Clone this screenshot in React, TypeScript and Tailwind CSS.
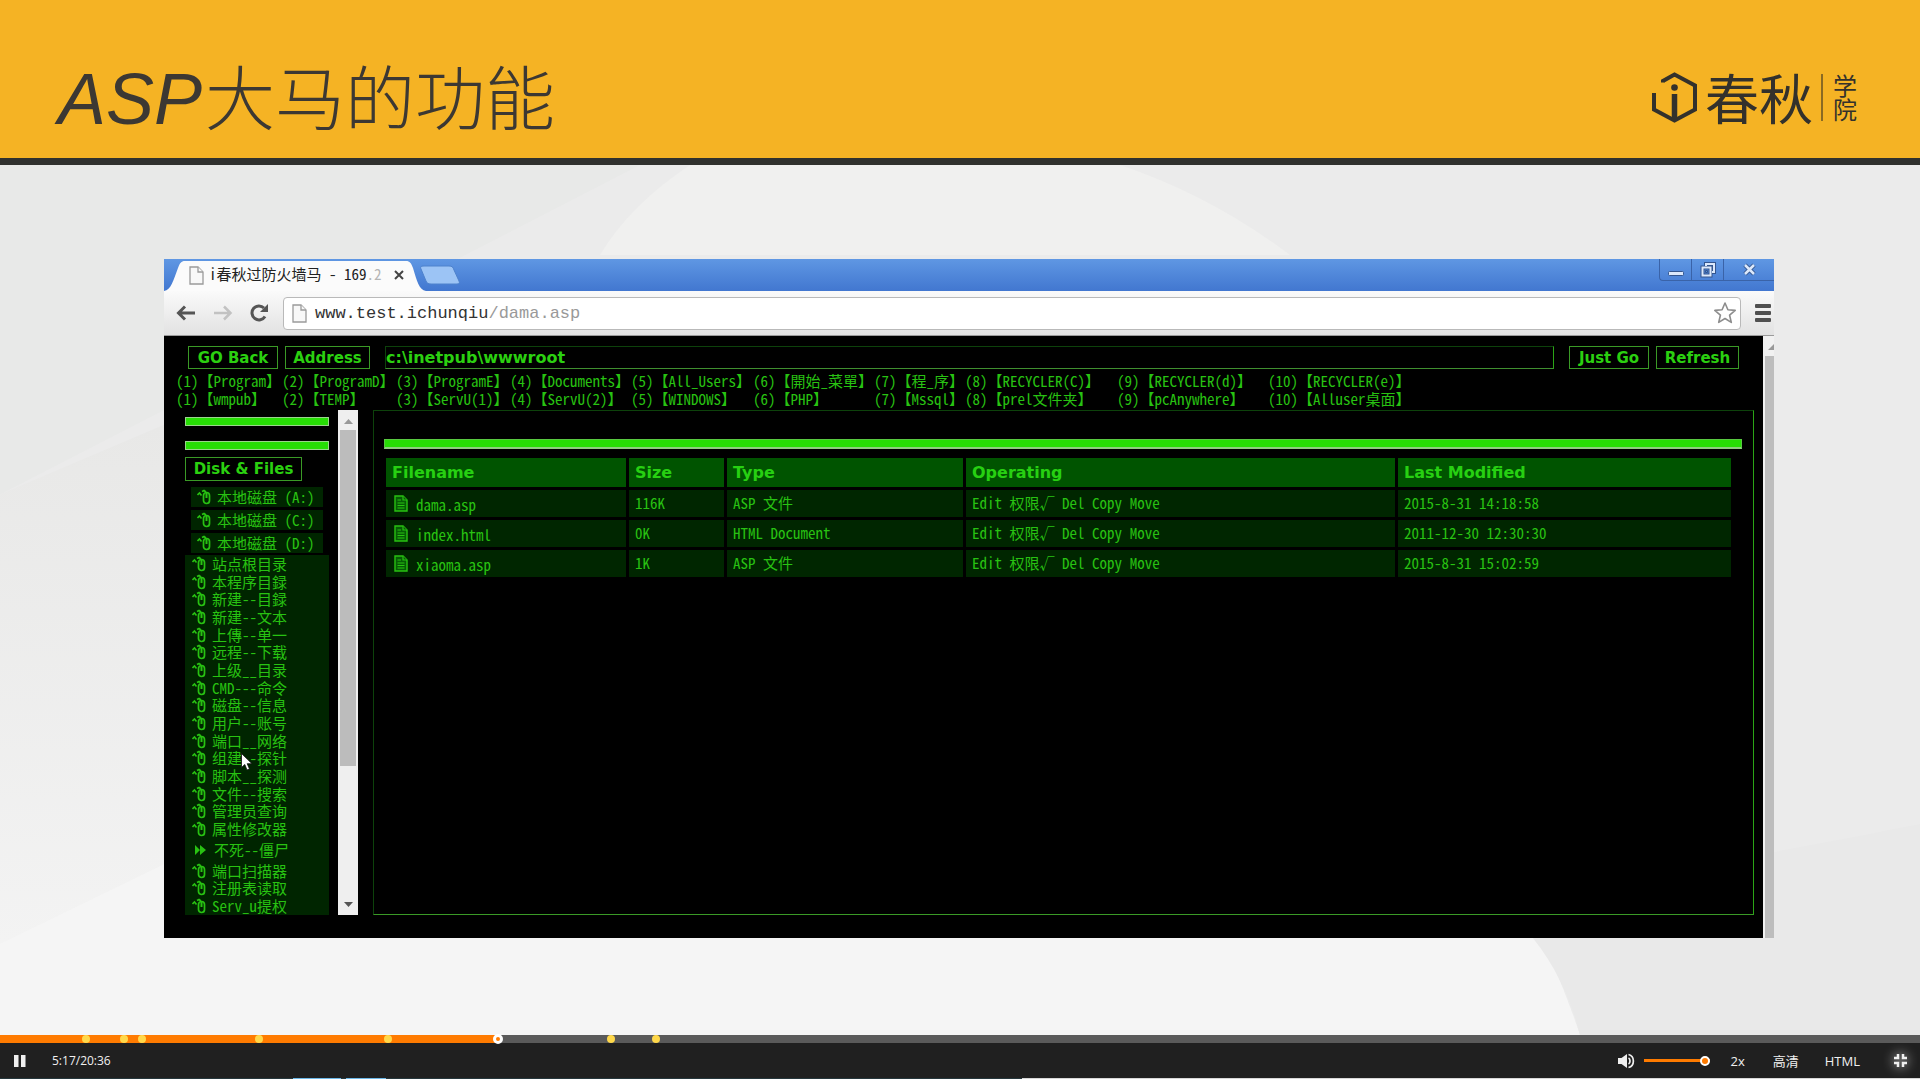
import { useState } from "react";

const quickLinks = [
  ["【Program】", "【ProgramD】", "【ProgramE】", "【Documents】", "【All_Users】", "【開始_菜單】", "【程_序】", "【RECYCLER(C)】", "【RECYCLER(d)】", "【RECYCLER(e)】"],
  ["【wmpub】", "【TEMP】", "【ServU(1)】", "【ServU(2)】", "【WINDOWS】", "【PHP】", "【Mssql】", "【prel文件夹】", "【pcAnywhere】", "【Alluser桌面】"],
];

const disks = ["本地磁盘 (A:)", "本地磁盘 (C:)", "本地磁盘 (D:)"];

const tools = [
  "站点根目录",
  "本程序目録",
  "新建--目録",
  "新建--文本",
  "上傳--单一",
  "远程--下载",
  "上级__目录",
  "CMD---命令",
  "磁盘--信息",
  "用户--账号",
  "端口__网络",
  "组建--探针",
  "脚本__探测",
  "文件--搜索",
  "管理员查询",
  "属性修改器",
];

const moreTools = ["端口扫描器", "注册表读取", "Serv_u提权"];

const files = [
  { name: "dama.asp", size: "116K", type: "ASP 文件", modified: "2015-8-31 14:18:58" },
  { name: "index.html", size: "0K", type: "HTML Document", modified: "2011-12-30 12:30:30" },
  { name: "xiaoma.asp", size: "1K", type: "ASP 文件", modified: "2015-8-31 15:02:59" },
];

const operations = ["Edit", "权限√", "Del", "Copy", "Move"];

// チャプター位置（％）
const chapters = [4.48, 6.46, 7.4, 13.49, 20.21, 31.82, 34.17];

const MouseIcon = () => (
  <svg className="h-4 w-[14px] shrink-0" viewBox="0 0 14 16" fill="none" stroke="currentColor">
    <path d="M0.500 6 2.500 4l2 2.500M5 2.500l2-1 2 1.500" strokeWidth="1.600" />
    <rect x="6.500" y="3.500" width="6" height="11" rx="3" strokeWidth="1.700" />
    <path d="M9.500 4v5" strokeWidth="2" />
  </svg>
);

const FileIcon = () => (
  <svg className="h-[17px] w-[14px] shrink-0" viewBox="0 0 14 17" fill="#065c05" stroke="currentColor">
    <path d="M1 1h8l4 4v11H1z" strokeWidth="1.400" />
    <path d="M9 1v4h4M3.500 5h3.500M3.500 8h7M3.500 10.500h7M3.500 13h7" strokeWidth="1.200" />
  </svg>
);

const PageIcon = () => (
  <svg className="h-[19px] w-[15px] shrink-0" viewBox="0 0 15 19" fill="#f8f8f8" stroke="#9a9a9a">
    <path d="M1 1h8l5 5v12H1z" strokeWidth="1.300" />
    <path d="M9 1v5h5" strokeWidth="1.300" />
  </svg>
);

const Logo = () => (
  <div className="flex items-center text-[#33312c]">
    <svg className="h-[51px] w-[45px]" viewBox="0 0 45 51" fill="none" stroke="currentColor">
      <path d="M11 10.500V9L22.500 2.500 43 13.500v24L22.500 48.500 2 37.500V21" strokeWidth="4" />
      <circle cx="22.500" cy="15.500" r="3.300" fill="currentColor" stroke="none" />
      <path d="M22.500 22v26" strokeWidth="5.500" />
    </svg>
    <span className="ml-2 font-['Noto_Sans_CJK_SC',sans-serif] text-[54px] leading-[54px]">春秋</span>
    <span className="ml-2 h-[47px] w-[2px] bg-[#8a6a22]" />
    <span className="ml-[10px] w-6 font-['Noto_Sans_CJK_SC',sans-serif] text-2xl leading-6">
      学院
    </span>
  </div>
);

const TabStrip = () => (
  <div className="flex h-8 justify-between bg-linear-to-b from-[#5f97e3] to-[#4277d0]">
    <div className="flex">
      <div className="relative flex w-[262px] items-center pl-[25px]">
        <svg className="absolute inset-0 h-8 w-[262px]" viewBox="0 0 262 32" fill="#fbfbfb">
          <path d="M0 32C7 31 9 22 14 9 16 4 17 2 21 2H242c4 0 5 2 7 7 4 13 6 22 13 23z" />
        </svg>
        <div className="relative flex items-center">
          <PageIcon />
          <span className="ml-[5px] w-[178px] whitespace-pre pb-[2px] font-['Noto_Sans_Mono_CJK_SC','Noto_Sans_CJK_SC',monospace] text-[15px] leading-5 text-[#222]">
            i春秋过防火墙马 - 169<span className="text-[#b5b5b5]">.2</span>
          </span>
          <button aria-label="Close tab" className="ml-[7px]">
            <svg className="size-[10px]" viewBox="0 0 10 10" stroke="#444" strokeWidth="2">
              <path d="M1 1l8 8M9 1 1 9" />
            </svg>
          </button>
        </div>
      </div>
      <button aria-label="New tab" className="-ml-[6px]">
        <svg className="h-5 w-[40px]" viewBox="0 0 40 20">
          <path d="M4 1h25c3 0 4 1 5 4l5 11c1 2 0 3-2 3H11c-3 0-4-1-5-3L1 4C0 2 1 1 4 1z" fill="#9cc4f5" stroke="#4e82cc" />
        </svg>
      </button>
    </div>
    <div className="flex h-[22px] rounded-bl border-b border-l border-[#3a63a8] text-[#dbe8fb]">
      <button aria-label="Minimize" className="flex w-8 items-center justify-center border-r border-[#3a63a8] pt-2">
        <svg className="h-[5px] w-4" viewBox="0 0 16 5">
          <rect x="0.500" y="0.500" width="15" height="4" rx="1" fill="currentColor" stroke="#34568f" />
        </svg>
      </button>
      <button aria-label="Restore" className="flex w-8 items-center justify-center border-r border-[#3a63a8]">
        <svg className="size-4" viewBox="0 0 16 16" fill="none">
          <path d="M6 4V2h8v8h-2M2.500 5.500h8v8h-8z" stroke="#34568f" strokeWidth="4" />
          <path d="M6 4V2h8v8h-2M2.500 5.500h8v8h-8z" stroke="currentColor" strokeWidth="2" />
          <path d="M5.500 8.500h2v2h-2z" stroke="#34568f" />
        </svg>
      </button>
      <button aria-label="Close" className="flex w-[50px] items-center justify-center">
        <svg className="size-[13px]" viewBox="0 0 13 13">
          <path d="M2 2l9 9M11 2l-9 9" stroke="#34568f" strokeWidth="4.500" />
          <path d="M2 2l9 9M11 2l-9 9" stroke="currentColor" strokeWidth="2.500" />
        </svg>
      </button>
    </div>
  </div>
);

const AddressBar = () => (
  <div className="flex h-[45px] items-center border-b border-[#9b9b9b] bg-linear-to-b from-[#fafafa] to-[#e2e2e2] pl-3 pr-[3px]">
    <button aria-label="Back">
      <svg className="h-4 w-5" viewBox="0 0 20 16" fill="none" stroke="#555" strokeWidth="3">
        <path d="M19 8H3M9 1.500 2.500 8 9 14.500" />
      </svg>
    </button>
    <button aria-label="Forward" className="ml-[17px]">
      <svg className="h-4 w-5" viewBox="0 0 20 16" fill="none" stroke="#c2c2c2" strokeWidth="2.500">
        <path d="M1 8h16M11 1.500 17.500 8 11 14.500" />
      </svg>
    </button>
    <button aria-label="Reload" className="ml-4">
      <svg className="size-5" viewBox="0 0 20 20" fill="none">
        <path d="M16 13.500A7 7 0 1 1 15 5" stroke="#555" strokeWidth="3" />
        <path d="M19 1v8h-8z" fill="#555" />
      </svg>
    </button>
    <div className="ml-[14px] flex h-[33px] flex-1 items-center rounded-sm border border-[#b9b9b9] bg-white pl-2 pr-[3px] font-['Liberation_Mono',monospace] text-[17px] leading-6">
      <PageIcon />
      <label htmlFor="url" className="ml-2 pt-[2px] text-[#333]">
        www.test.ichunqiu
      </label>
      <input id="url" defaultValue="/dama.asp" className="min-w-0 flex-1 pt-[2px] text-[#999] outline-none" />
      <button aria-label="Bookmark">
        <svg className="size-6" viewBox="0 0 24 24" fill="#fff" stroke="#8d8d8d" strokeWidth="1.600" strokeLinejoin="round">
          <path d="M12 2l2.900 6.800 7.300.6-5.600 4.800 1.700 7.200L12 17.500l-6.300 3.900 1.700-7.200L1.800 9.400l7.300-.6z" />
        </svg>
      </button>
    </div>
    <button aria-label="Menu" className="ml-[14px]">
      <svg className="h-[18px] w-4" viewBox="0 0 16 18" fill="#505050">
        <rect width="16" height="4" rx="1" y="0" />
        <rect width="16" height="4" rx="1" y="7" />
        <rect width="16" height="4" rx="1" y="14" />
      </svg>
    </button>
  </div>
);

const PathForm = () => {
  const [path, setPath] = useState("c:\\inetpub\\wwwroot");

  return (
    <form
      onSubmit={(e) => e.preventDefault()}
      className="flex h-[33px] gap-[7px] px-6 pt-[10px] font-['DejaVu_Sans',sans-serif] text-[15px] font-bold leading-5 text-[#2bd010]"
    >
      <button className="w-[90px] border border-[#3a9a26]">GO Back</button>
      <button className="w-[85px] border border-[#3a9a26]">Address</button>
      <input
        aria-label="Path"
        value={path}
        onChange={(e) => setPath(e.target.value)}
        className="mx-2 min-w-0 flex-1 border border-b-[#3f8f2f] border-l-[#0d420b] border-r-[#2ba516] border-t-[#0d420b] text-base leading-5 outline-none"
      />
      <button className="w-[80px] border border-[#3a9a26]">Just Go</button>
      <button className="w-[83px] border border-[#3a9a26]">Refresh</button>
    </form>
  );
};

const QuickLinks = () => (
  <nav className="mt-[3px] pl-3">
    {quickLinks.map((row, i) => (
      <div
        key={i}
        className="grid h-[18px] grid-cols-[106px_114px_114px_121px_122px_121px_91px_152px_151px_1fr] leading-[18px]"
      >
        {row.map((link, j) => (
          <a key={link} href="#" className="whitespace-nowrap">
            ({j + 1}){link}
          </a>
        ))}
      </div>
    ))}
  </nav>
);

const Sidebar = () => (
  <aside className="flex h-[505px]">
    <div className="w-[144px] overflow-hidden pt-[7px]">
      <div className="h-[9px] border border-[#9ad58c] bg-[#27dd05]" />
      <div className="mt-[15px] h-[9px] border border-[#9ad58c] bg-[#27dd05]" />
      <button className="mt-[7px] block h-6 w-[117px] border border-[#3a9a26] font-['DejaVu_Sans',sans-serif] text-[15px] font-bold leading-5 text-[#2bd010]">
        Disk &amp; Files
      </button>
      <ul className="mx-[6px] mt-[6px] flex flex-col gap-[3px]">
        {disks.map((disk) => (
          <li key={disk} className="flex h-5 items-center gap-[6px] bg-[#002500] pl-[6px]">
            <MouseIcon />
            <a href="#" className="whitespace-nowrap">{disk}</a>
          </li>
        ))}
      </ul>
      <div className="mt-[2px] bg-[#002500] pl-[7px]">
        <ul className="grid h-[283px] auto-rows-fr">
          {tools.map((tool) => (
            <li key={tool} className="flex items-center gap-[6px]">
              <MouseIcon />
              <a href="#" className="whitespace-nowrap leading-4">{tool}</a>
            </li>
          ))}
        </ul>
        <div className="flex h-6 items-center gap-2 pl-[3px]">
          <svg className="h-[10px] w-[11px]" viewBox="0 0 11 10" fill="currentColor">
            <path d="M0 0l5 5-5 5zM5 0l6 5-6 5z" />
          </svg>
          <a href="#" className="whitespace-nowrap leading-4">不死--僵尸</a>
        </div>
        <ul className="grid h-[53px] auto-rows-fr">
          {moreTools.map((tool) => (
            <li key={tool} className="flex items-center gap-[6px]">
              <MouseIcon />
              <a href="#" className="whitespace-nowrap leading-4">{tool}</a>
            </li>
          ))}
        </ul>
      </div>
    </div>
    <div className="ml-[9px] flex w-5 flex-col items-center bg-[#efefef]">
      <svg className="h-5 w-[9px] shrink-0" viewBox="0 0 9 20" fill="#999">
        <path d="M0 14h9L4.500 9z" />
      </svg>
      <div className="h-[336px] w-4 bg-[#bcbcbc]" />
      <svg className="mt-auto h-5 w-[9px] shrink-0" viewBox="0 0 9 20" fill="#555">
        <path d="M0 7h9l-4.500 5z" />
      </svg>
    </div>
  </aside>
);

const FileTable = () => (
  <table className="ml-[9px] mt-[6px] w-[calc(100%-28px)] table-fixed border-separate border-spacing-[3px] text-left">
    <colgroup>
      <col className="w-[240px]" />
      <col className="w-[95px]" />
      <col className="w-[236px]" />
      <col />
      <col className="w-[333px]" />
    </colgroup>
    <thead>
      <tr className="h-[29px] font-['DejaVu_Sans',sans-serif] text-base leading-5 text-[#27d012]">
        {["Filename", "Size", "Type", "Operating", "Last Modified"].map((title) => (
          <th key={title} className="bg-[#005400] px-[6px] py-0 font-bold">
            {title}
          </th>
        ))}
      </tr>
    </thead>
    <tbody>
      {files.map((file) => (
        <tr key={file.name} className="h-[27px] leading-5">
          <td className="bg-[#002600] px-2 py-0">
            <div className="flex items-center gap-[8px]">
              <FileIcon />
              <a href="#" className="pt-[3px]">{file.name}</a>
            </div>
          </td>
          <td className="bg-[#002600] px-[6px] pb-[2px] pt-0">{file.size}</td>
          <td className="bg-[#002600] px-[6px] pb-[2px] pt-0">{file.type}</td>
          <td className="bg-[#002600] px-[6px] pb-[2px] pt-0">
            {operations.map((op) => (
              <a key={op} href="#">{op} </a>
            ))}
          </td>
          <td className="bg-[#002600] px-[6px] pb-[2px] pt-0">{file.modified}</td>
        </tr>
      ))}
    </tbody>
  </table>
);

const BrowserWindow = () => (
  <section className="relative ml-[164px] mr-[146px]">
    <TabStrip />
    <AddressBar />
    <div className="flex bg-black">
      <div className="min-w-0 flex-1 pb-[23px] font-['Noto_Sans_Mono_CJK_SC','Noto_Sans_CJK_SC',monospace] text-[15px] text-[#28c212]">
        <PathForm />
        <QuickLinks />
        <div className="mt-[2px] flex pl-[21px] pr-[9px]">
          <Sidebar />
          <main className="ml-[15px] min-w-0 flex-1 border border-b-[#3a9a26] border-l-[#0d420b] border-r-[#2ba516] border-t-[#0d420b] pt-7">
            <div className="ml-[10px] mr-[11px] h-[10px] border border-b-2 border-[#58c840] border-b-[#8fce80] bg-[#27dd05]" />
            <FileTable />
          </main>
        </div>
      </div>
      <div className="flex w-[11px] flex-col bg-[#f1f1f1]">
        <svg className="h-5 w-[11px]" viewBox="0 0 11 20" fill="#999">
          <path d="M5 14h6V8z" />
        </svg>
        <div className="ml-[2px] flex-1 bg-[#bdbdbd]" />
      </div>
    </div>
    {/* マウスカーソル */}
    <svg className="absolute left-[77px] top-[494px] h-[18px] w-3" viewBox="0 0 12 18" fill="#fff" stroke="#111" strokeWidth="0.800">
      <path d="M0.500 0.500v14l3.300-3 2.200 5.500 2.500-1-2.300-5.300h4.800z" />
    </svg>
  </section>
);

const ProgressBar = () => {
  const [played, setPlayed] = useState(25.8);

  return (
    <div className="relative h-2 bg-[#5a5a5a]">
      <div className="h-2 bg-[#ff7b00]" style={{ width: `${played}%` }} />
      {chapters.map((left) => (
        <span key={left} className="absolute top-0 -ml-1 size-2 rounded-full bg-[#ffd84a]" style={{ left: `${left}%` }} />
      ))}
      <input
        type="range"
        aria-label="Progress"
        min={0}
        max={100}
        step={0.01}
        value={played}
        onChange={(e) => setPlayed(Number(e.target.value))}
        className="absolute inset-0 h-2 w-full appearance-none bg-transparent [&::-webkit-slider-thumb]:size-[10px] [&::-webkit-slider-thumb]:appearance-none [&::-webkit-slider-thumb]:rounded-full [&::-webkit-slider-thumb]:border-[3px] [&::-webkit-slider-thumb]:border-white [&::-webkit-slider-thumb]:bg-[#ff7b00]"
      />
    </div>
  );
};

const PlayerControls = () => (
  <div className="flex h-[35px] items-center bg-[#202020] pl-[14px] pr-[13px] font-['Open_Sans','Noto_Sans_CJK_SC',sans-serif] text-[13px] leading-5 text-[#f0f0f0]">
    <button aria-label="Pause">
      <svg className="size-3" viewBox="0 0 12 12" fill="currentColor">
        <path d="M0 0h4.500v12H0zM7 0h4.500v12H7z" />
      </svg>
    </button>
    <span className="ml-[26px] text-xs">5:17/20:36</span>
    <button aria-label="Mute" className="ml-auto">
      <svg className="h-4 w-[17px]" viewBox="0 0 17 16" fill="none" stroke="currentColor">
        <path d="M0 5h3.500L9 1v14l-5.500-4H0z" fill="currentColor" stroke="none" />
        <path d="M10.500 5c2 1 2 5 0 6M10.500 1.500c6.500 1.500 6.500 11.500 0 13" strokeWidth="1.700" />
      </svg>
    </button>
    <input
      type="range"
      aria-label="Volume"
      defaultValue={100}
      className="ml-[9px] h-[3px] w-[66px] appearance-none bg-[#ff7b00] [&::-webkit-slider-thumb]:size-[10px] [&::-webkit-slider-thumb]:appearance-none [&::-webkit-slider-thumb]:rounded-full [&::-webkit-slider-thumb]:border-2 [&::-webkit-slider-thumb]:border-white [&::-webkit-slider-thumb]:bg-[#ff7b00]"
    />
    <button className="ml-[21px]">2x</button>
    <button className="ml-[28px]">高清</button>
    <button className="ml-[26px]">HTML</button>
    <button aria-label="Exit fullscreen" className="ml-[34px] drop-shadow-[0_0_6px_#ffffff]">
      <svg className="size-[13px]" viewBox="0 0 13 13" fill="none" stroke="currentColor" strokeWidth="2.500">
        <path d="M0 4h4V0M9 0v4h4M13 9H9v4M4 13V9H0" />
      </svg>
    </button>
  </div>
);

export default function App() {
  return (
    <div className="flex min-h-screen flex-col bg-[#ebebeb]">
      <header className="flex h-[165px] items-start justify-between border-b-[7px] border-[#30312e] bg-[#f5b324] pl-[58px] pr-[63px]">
        <h1 className="mt-[56px] flex gap-[3px] font-['Noto_Sans_CJK_SC',sans-serif] text-[70px] font-light leading-[78px] text-[#3c3833]">
          <span className="font-['Liberation_Sans',sans-serif] text-[72px] font-normal italic leading-[86px]">ASP</span>
          <span>大马的功能</span>
        </h1>
        <div className="mt-[70px]">
          <Logo />
        </div>
      </header>
      <div className="relative flex-1 pt-[94px]">
        <svg className="absolute inset-0 size-full" viewBox="0 0 1920 871" preserveAspectRatio="none">
          <defs>
            <linearGradient id="fade" x1="0" y1="0" x2="0" y2="1">
              <stop offset="0" stopColor="#e8e8e7" />
              <stop offset="1" stopColor="#f5f5f5" />
            </linearGradient>
          </defs>
          <path d="M0 0H640L0 330z" fill="#e8e9e8" />
          <path d="M690 0h430q90 30 170 90H600q30-50 90-90z" fill="#f0f0ef" />
          <path d="M0 330 164 260V871H0z" fill="url(#fade)" />
          <path d="M164 700H1500q50 80 80 171H0V780z" fill="#f5f5f5" />
          <path d="M1500 740l420-80v211H1580q-20-80-80-131z" fill="#e9e9e9" />
        </svg>
        <BrowserWindow />
      </div>
      <footer>
        <ProgressBar />
        <PlayerControls />
        <div className="flex h-px bg-[#26373c]">
          <div className="ml-[293px] w-12 bg-[#6cb8e8]" />
          <div className="ml-[5px] w-10 bg-[#6cb8e8]" />
          <div className="ml-[636px] flex-1 bg-[#d8d8d8]" />
        </div>
      </footer>
    </div>
  );
}
